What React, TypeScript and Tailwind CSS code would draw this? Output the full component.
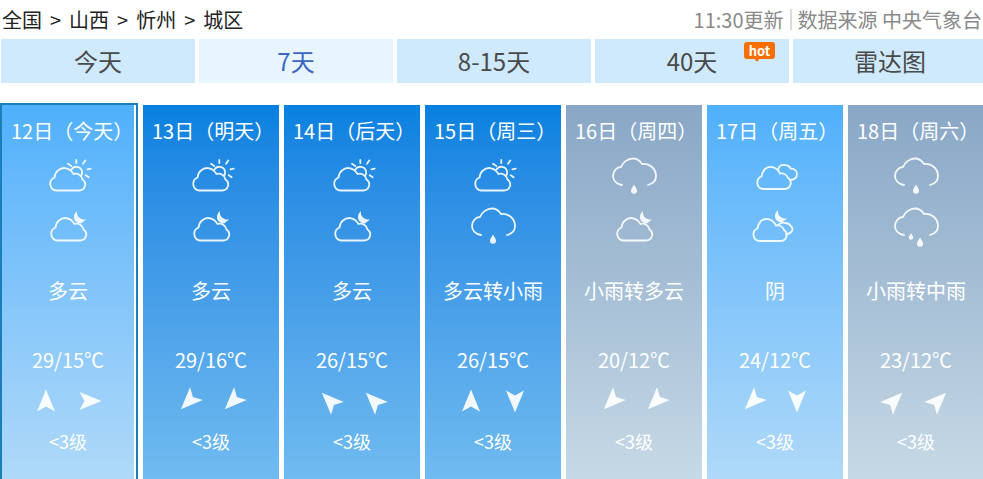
const font = { fontFamily: '"Noto Sans CJK SC", "Noto Sans", sans-serif' };

const tabs = [
  { label: '今天' },
  { label: '7天', active: true },
  { label: '8-15天' },
  { label: '40天', hot: true },
  { label: '雷达图' },
];

const cloud = 'M18 33.5H41a6 6 0 0 0 3.5-11a7 7 0 0 0-9-5.500C32 11 25 9 20 13.500C18 15 17 17 16.500 20.500A6.800 6.800 0 0 0 18 33.500Z';
const openCloud = 'M18 28C12 27 9 23 9 19C9 14 13 10 17 10C19 5 24 1.500 29 1.500C33 1.500 36 4 38 7C46 6 52 12 52 19C52 24 48 27 44 28';

const Drop = ({ x, y, s = 1 }: { x: number; y: number; s?: number }) => (
  <path
    transform={`translate(${x} ${y}) scale(${s})`}
    d="M0-5.500C1.200-3 3-1.500 3 .8A3 3 0 0 1-3 .8C-3-1.500-1.200-3 0-5.500Z"
    fill="white"
    stroke="none"
  />
);

const Moon = ({ dx = 0, dy = 0 }: { dx?: number; dy?: number }) => (
  <path
    transform={`translate(${dx} ${dy})`}
    d="M39 4C34 8 35 16 43 16.500L48 12.500C43 13 38 10 39 4Z"
    fill="white"
    stroke="none"
  />
);

const icons: Record<string, React.ReactNode> = {
  sun: (
    <>
      <path d={cloud} />
      <path d="M33.500 12.500a5.800 5.800 0 0 1 10.500 1.500a5.800 5.800 0 0 1-1 5" />
      <path d="M38.300 3v3M47.300 3.500l-2.300 3.200M52.700 11.700l-3.300.6M50.700 20.300l-3-2M30 6.700l3.300 2.300" />
    </>
  ),
  night: (
    <>
      <path d={cloud} transform="translate(1 0)" />
      <Moon />
    </>
  ),
  rain: (
    <>
      <path d={openCloud} />
      <Drop x={30} y={33} />
    </>
  ),
  rain2: (
    <>
      <path d={openCloud} />
      <Drop x={25} y={30} s={0.75} />
      <Drop x={34} y={36} />
    </>
  ),
  cloudy: (
    <>
      <path d="M18 32H40a6 6 0 0 0 3-11a7 7 0 0 0-8-4.500C32 10 25 8 20 12C18 14 17 16 16.500 19.500A6.500 6.500 0 0 0 18 32Z" />
      <path d="M33 13c1-4 4-5.500 7-5c3 .3 5 2 5.500 3.500C49 11.500 52 13.500 52 17c0 3-2 5.500-6.500 6" />
    </>
  ),
  cloudyNight: (
    <>
      <path d="M15 34H36a6 6 0 0 0 3-11a7 7 0 0 0-8-4.500C28 12 21 10 16 14C14 16 13 18 12.500 21.500A6.500 6.500 0 0 0 15 34Z" />
      <path d="M33 18c2-2 4-3 7-2c3 0 5 1.500 6.500 4c2 2 1 6-5.500 7.500" />
      <Moon dx={-6} dy={-1} />
    </>
  ),
};

const WeatherIcon = ({ name }: { name: string }) => (
  <svg
    width="60"
    height="40"
    viewBox="0 0 60 40"
    fill="none"
    stroke="white"
    strokeWidth="1.800"
    strokeLinecap="round"
    strokeLinejoin="round"
    className="opacity-90"
  >
    {icons[name]}
  </svg>
);

const WindArrow = ({ deg }: { deg: number }) => (
  <svg width="28" height="28" viewBox="-14 -14 28 28" className="blur-[0.6px]">
    <path
      d="M0-11.500L9 10.500L0 5.500L-9 10.500Z"
      fill="white"
      fillOpacity="0.92"
      transform={`rotate(${deg})`}
    />
  </svg>
);

const days = [
  { date: '12日（今天）', a: 'sun', b: 'night', text: '多云', temp: '29/15℃', wind: [0, 90], tone: 'today' },
  { date: '13日（明天）', a: 'sun', b: 'night', text: '多云', temp: '29/16℃', wind: [225, 225], tone: 'blue' },
  { date: '14日（后天）', a: 'sun', b: 'night', text: '多云', temp: '26/15℃', wind: [-45, -45], tone: 'blue' },
  { date: '15日（周三）', a: 'sun', b: 'rain', text: '多云转小雨', temp: '26/15℃', wind: [0, 180], tone: 'blue' },
  { date: '16日（周四）', a: 'rain', b: 'night', text: '小雨转多云', temp: '20/12℃', wind: [225, 225], tone: 'grey' },
  { date: '17日（周五）', a: 'cloudy', b: 'cloudyNight', text: '阴', temp: '24/12℃', wind: [225, 180], tone: 'light' },
  { date: '18日（周六）', a: 'rain', b: 'rain2', text: '小雨转中雨', temp: '23/12℃', wind: [45, 45], tone: 'grey' },
];

const DayCard = ({ day }: { day: (typeof days)[0] }) => {
  const toneClass =
    day.tone === 'grey'
      ? 'from-[#89a7c6] to-[#c6d9e6]'
      : day.tone === 'blue'
        ? 'from-[#0580e0] to-[#70bbf0]'
        : 'from-[#4fb0fb] to-[#afd9f8]';

  return (
    <div className={`h-[374px] bg-gradient-to-b ${toneClass} flex flex-col text-white`}>
      <div className="h-[52px] pl-[9px] pt-[12px] text-[20px] leading-[28px] whitespace-nowrap">{day.date}</div>
      <div className="flex flex-col items-center gap-[10px] h-[90px]">
        <WeatherIcon name={day.a} />
        <WeatherIcon name={day.b} />
      </div>
      <div className="mt-[26px] h-[36px] text-center text-[20px] leading-[36px] whitespace-nowrap">{day.text}</div>
      <div className="mt-[33px] h-[36px] text-center text-[20px] leading-[36px]">{day.temp}</div>
      <div className="mt-[9px] h-[28px] flex justify-center gap-[16px]">
        <WindArrow deg={day.wind[0]} />
        <WindArrow deg={day.wind[1]} />
      </div>
      <div className="mt-[13px] h-[26px] text-center text-[18px] leading-[26px]">&lt;3级</div>
    </div>
  );
};

export default function App() {
  return (
    <div className="w-[983px] h-[479px] overflow-hidden bg-white" style={font}>
      <div className="h-[39px] flex items-center justify-between pl-[2px] pr-[1px]">
        <div className="flex items-center text-[20px] text-[#222] leading-[36px]">
          <span>全国</span>
          <span className="mx-[8px]">&gt;</span>
          <span>山西</span>
          <span className="mx-[8px]">&gt;</span>
          <span>忻州</span>
          <span className="mx-[8px]">&gt;</span>
          <span>城区</span>
        </div>
        <div className="flex items-center text-[20px] text-[#8a8a8a] leading-[36px]">
          <span>11:30更新</span>
          <span className="mx-[6px] w-[2px] h-[21px] bg-[#dcdcdc]" />
          <span>数据来源 中央气象台</span>
        </div>
      </div>

      <div className="flex gap-[4px] pl-[1px]">
        {tabs.map((tab) => (
          <div
            key={tab.label}
            className={`relative w-[194px] shrink-0 h-[44px] flex items-center justify-center text-[24px] ${
              tab.active ? 'bg-[#e9f5fe] text-[#3a66c0]' : 'bg-[#cfe9fd] text-[#4a4a4a]'
            }`}
          >
            {tab.label}
            {tab.hot && (
              <div className="absolute left-[149px] top-[3px] w-[31px] h-[17px] rounded-[3px] bg-[#f76f00] flex items-center justify-center text-[13px] leading-none font-bold text-white">
                hot
                <span className="absolute left-[10px] top-[16px] w-0 h-0 border-x-[3px] border-x-transparent border-t-[4px] border-t-[#f76f00]" />
              </div>
            )}
          </div>
        ))}
      </div>

      <div className="mt-[22px] flex gap-[5px] items-end h-[374px]">
        {days.map((day, i) =>
          i === 0 ? (
            <div key={day.date} className="w-[138px] shrink-0 -mt-[2px] border-x-[2px] border-t-[2px] border-[#1a7fb8] h-[376px]">
              <div className="-ml-[2px] pl-[2px] pr-[0px] border-r-[2px] border-white">
                <DayCard day={day} />
              </div>
            </div>
          ) : (
            <div key={day.date} className="w-[136px] shrink-0">
              <DayCard day={day} />
            </div>
          ),
        )}
      </div>
    </div>
  );
}
